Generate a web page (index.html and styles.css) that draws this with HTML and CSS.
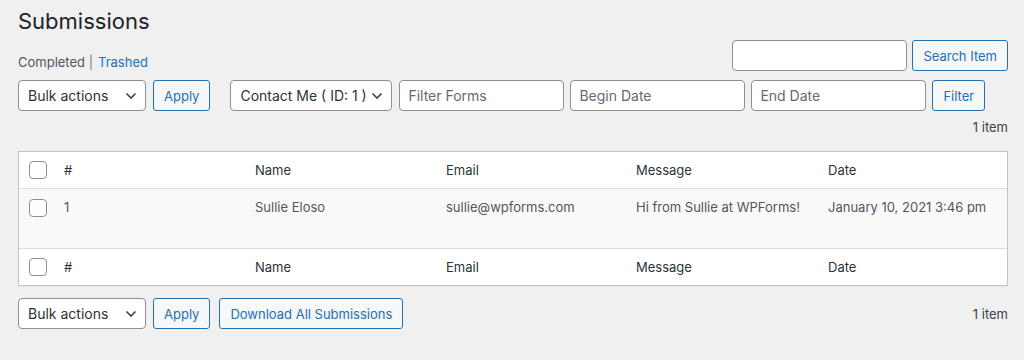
FILE: index.html
```html
<!DOCTYPE html>
<html lang="en">
<head>
    <meta charset="UTF-8">
    <title>Submissions</title>
    <link rel="stylesheet" href="styles.css">
</head>
<body>

<div class="wrap">
    <h1 class="page-title">Submissions</h1>

    <div class="top-row">
        <ul class="subsubsub">
            <li class="current">Completed <span class="sep">|</span></li>
            <li><a href="#">Trashed</a></li>
        </ul>
        <div class="search-box">
            <input type="text" class="search-input">
            <button class="button">Search Item</button>
        </div>
    </div>

    <div class="tablenav">
        <div class="select select-bulk">
            <span>Bulk actions</span>
            <svg width="12" height="8" viewBox="0 0 12 8"><path d="M1.5 1.5 L6 6 L10.5 1.5" fill="none" stroke="#3c434a" stroke-width="1.6"/></svg>
        </div>
        <button class="button apply">Apply</button>
        <div class="select select-form">
            <span>Contact Me ( ID: 1 )</span>
            <svg width="12" height="8" viewBox="0 0 12 8"><path d="M1.5 1.5 L6 6 L10.5 1.5" fill="none" stroke="#3c434a" stroke-width="1.6"/></svg>
        </div>
        <input type="text" class="filter-input w-forms" placeholder="Filter Forms">
        <input type="text" class="filter-input w-date" placeholder="Begin Date">
        <input type="text" class="filter-input w-date" placeholder="End Date">
        <button class="button">Filter</button>
    </div>

    <div class="displaying-num top-num">1 item</div>

    <div class="list-table">
        <div class="row row-head">
            <div class="cell cell-check"><span class="checkbox"></span></div>
            <div class="cell">#</div>
            <div class="cell">Name</div>
            <div class="cell">Email</div>
            <div class="cell">Message</div>
            <div class="cell">Date</div>
        </div>
        <div class="row row-body">
            <div class="cell cell-check"><span class="checkbox"></span></div>
            <div class="cell">1</div>
            <div class="cell">Sullie Eloso</div>
            <div class="cell">sullie@wpforms.com</div>
            <div class="cell">Hi from Sullie at WPForms!</div>
            <div class="cell">January 10, 2021 3:46 pm</div>
        </div>
        <div class="row row-foot">
            <div class="cell cell-check"><span class="checkbox"></span></div>
            <div class="cell">#</div>
            <div class="cell">Name</div>
            <div class="cell">Email</div>
            <div class="cell">Message</div>
            <div class="cell">Date</div>
        </div>
    </div>

    <div class="tablenav bottom">
        <div class="actions">
            <div class="select select-bulk">
                <span>Bulk actions</span>
                <svg width="12" height="8" viewBox="0 0 12 8"><path d="M1.5 1.5 L6 6 L10.5 1.5" fill="none" stroke="#3c434a" stroke-width="1.6"/></svg>
            </div>
            <button class="button apply">Apply</button>
            <button class="button download">Download All Submissions</button>
        </div>
        <div class="displaying-num">1 item</div>
    </div>
</div>

</body>
</html>
```

FILE: styles.css
```css
body {
    background-color: #f0f0f1;
    font-family: Inter, "Noto Sans", sans-serif;
    color: #3c434a;
    margin: 0;
    padding: 0;
}
.wrap {
    padding: 0 16px 0 18px;
}
.page-title {
    font-size: 22px;
    font-weight: 400;
    line-height: 29px;
    margin: 7px 0 0 0;
    color: #1d2327;
}
.top-row {
    display: flex;
    justify-content: space-between;
    align-items: flex-end;
    margin-top: 4px;
}
.subsubsub {
    list-style: none;
    margin: 0 0 1px 0;
    padding: 0;
    display: flex;
    font-size: 13px;
    color: #50575e;
}
.subsubsub li {
    margin-right: 5px;
}
.subsubsub .sep {
    color: #787c82;
}
.subsubsub a {
    color: #2271b1;
    text-decoration: none;
}
.search-box {
    display: flex;
    gap: 5px;
}
.search-input {
    width: 175px;
    height: 31px;
    box-sizing: border-box;
    border: 1px solid #8c8f94;
    border-radius: 4px;
    background: #fff;
    outline: none;
}
.button {
    height: 31px;
    box-sizing: border-box;
    padding: 0 10px;
    border: 1px solid #2271b1;
    border-radius: 3px;
    background: #f6f7f7;
    color: #2271b1;
    font-family: inherit;
    font-size: 13px;
    cursor: pointer;
}
.button.apply {
    margin-left: 1px;
}
.tablenav {
    display: flex;
    align-items: center;
    gap: 6px;
    margin-top: 9px;
}
.select {
    height: 31px;
    box-sizing: border-box;
    border: 1px solid #8c8f94;
    border-radius: 4px;
    background: #fff;
    display: flex;
    align-items: center;
    justify-content: space-between;
    padding: 0 8px 0 9px;
    font-size: 14px;
    color: #2c3338;
}
.select-bulk {
    width: 128px;
}
.select-form {
    width: 162px;
    margin-left: 14px;
}
.filter-input {
    height: 31px;
    box-sizing: border-box;
    border: 1px solid #8c8f94;
    border-radius: 4px;
    background: #fff;
    padding: 0 8px;
    font-family: inherit;
    font-size: 14px;
    outline: none;
}
.filter-input::placeholder {
    color: #646970;
}
.w-forms {
    width: 165px;
    margin-left: 1px;
}
.w-date {
    width: 175px;
}
.displaying-num {
    font-size: 13px;
    color: #3c434a;
}
.top-num {
    text-align: right;
    margin-top: 8px;
    height: 32px;
}
.list-table {
    background: #fff;
    border: 1px solid #c3c4c7;
    box-shadow: 0 1px 1px rgba(0, 0, 0, 0.04);
    font-size: 13px;
}
.row {
    display: grid;
    grid-template-columns: 37px 191px 191px 190px 192px 1fr;
}
.row-head {
    height: 36px;
    align-items: center;
    border-bottom: 1px solid #dcdcde;
    color: #2c3338;
}
.row-body {
    height: 59px;
    align-items: start;
    padding-top: 10px;
    box-sizing: border-box;
    background: #f9f9f9;
    color: #50575e;
}
.row-foot {
    height: 36px;
    align-items: center;
    border-top: 1px solid #dcdcde;
    color: #2c3338;
}
.cell {
    padding: 0 8px;
    white-space: nowrap;
}
.cell-check {
    padding: 0 0 0 10px;
    display: flex;
    align-items: center;
}
.checkbox {
    display: block;
    width: 16px;
    height: 16px;
    border: 1px solid #8c8f94;
    border-radius: 4px;
    background: #fff;
}
.tablenav.bottom {
    justify-content: space-between;
    margin-top: 12px;
}
.actions {
    display: flex;
    gap: 6px;
}
.actions .download {
    margin-left: 3px;
}
```
